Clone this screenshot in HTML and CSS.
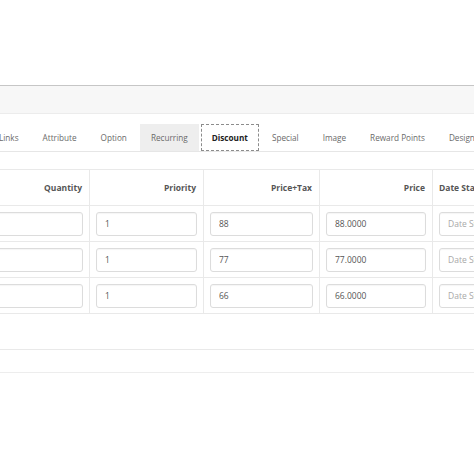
FILE: index.html
```html
<!DOCTYPE html>
<html>
<head>
<meta charset="utf-8">
<link rel="stylesheet" href="styles.css">
</head>
<body>
<div class="page">
  <div class="panel-heading"></div>
  <ul class="tabs">
    <li class="tab">Links</li>
    <li class="tab">Attribute</li>
    <li class="tab">Option</li>
    <li class="tab hover">Recurring</li>
    <li class="tab active">Discount</li>
    <li class="tab">Special</li>
    <li class="tab">Image</li>
    <li class="tab">Reward Points</li>
    <li class="tab">Design</li>
  </ul>
  <table class="grid">
    <colgroup>
      <col class="c-qty">
      <col class="c-pri">
      <col class="c-tax">
      <col class="c-price">
      <col class="c-date">
    </colgroup>
    <thead>
      <tr>
        <th class="r">Quantity</th>
        <th class="r">Priority</th>
        <th class="r">Price+Tax</th>
        <th class="r">Price</th>
        <th class="l">Date Start</th>
      </tr>
    </thead>
    <tbody>
      <tr>
        <td><input class="field" type="text" value=""></td>
        <td><input class="field" type="text" value="1"></td>
        <td><input class="field" type="text" value="88"></td>
        <td><input class="field" type="text" value="88.0000"></td>
        <td><input class="field" type="text" placeholder="Date Start"></td>
      </tr>
      <tr>
        <td><input class="field" type="text" value=""></td>
        <td><input class="field" type="text" value="1"></td>
        <td><input class="field" type="text" value="77"></td>
        <td><input class="field" type="text" value="77.0000"></td>
        <td><input class="field" type="text" placeholder="Date Start"></td>
      </tr>
      <tr>
        <td><input class="field" type="text" value=""></td>
        <td><input class="field" type="text" value="1"></td>
        <td><input class="field" type="text" value="66"></td>
        <td><input class="field" type="text" value="66.0000"></td>
        <td><input class="field" type="text" placeholder="Date Start"></td>
      </tr>
    </tbody>
    <tfoot>
      <tr>
        <td class="foot" colspan="5"></td>
      </tr>
    </tfoot>
  </table>
  <div class="panel-foot"></div>
</div>
</body>
</html>
```

FILE: styles.css
```css
html, body {
  margin: 0;
  padding: 0;
  background: #ffffff;
  overflow: hidden;
}

body {
  font-family: "Open Sans", "DejaVu Sans", sans-serif;
  font-size: 8.5px;
  color: #666666;
}

.page {
  padding-top: 85px;
  width: 474px;
  overflow: hidden;
}

.panel-heading {
  height: 27px;
  border-top: 1px solid #c6c6c6;
  border-bottom: 1px solid #ececec;
  background: #f7f7f7;
}

.tabs {
  list-style: none;
  margin: 10px 0 0 -12px;
  padding: 0;
  display: flex;
  gap: 2px;
  border-bottom: 1px solid #e6e6e6;
  width: 600px;
  font-size: 8.2px;
}

.tab {
  flex: none;
  height: 27px;
  line-height: 27px;
  padding: 0 11px;
  color: #6a6a6a;
  white-space: nowrap;
  box-sizing: border-box;
}

.tab.hover {
  background: #eeeeee;
}

.tab.active {
  border: 1px dashed #8c8c8c;
  line-height: 25px;
  padding: 0 10px;
  color: #222222;
  font-weight: 700;
}

.grid {
  margin: 17px 0 0 -31px;
  border-collapse: collapse;
  table-layout: fixed;
  width: 592px;
}

.c-qty { width: 120px; }
.c-pri { width: 114px; }
.c-tax { width: 116px; }
.c-price { width: 113px; }
.c-date { width: 129px; }

.grid th,
.grid td {
  border: 1px solid #e9e9e9;
  padding: 0 6px;
  box-sizing: border-box;
}

.grid thead tr {
  height: 36px;
}

.grid tbody tr {
  height: 36px;
}

.grid th {
  font-weight: 700;
  color: #555555;
  white-space: nowrap;
  overflow: hidden;
}

.grid th.r { text-align: right; padding-right: 7px; }
.grid th.l { text-align: left; }

.field {
  display: block;
  width: 100%;
  height: 24px;
  box-sizing: border-box;
  margin: 0;
  padding: 0 8px;
  border: 1px solid #dcdcdc;
  border-radius: 3px;
  font-family: "Open Sans", "DejaVu Sans", sans-serif;
  font-size: 8.5px;
  color: #555555;
  background: #ffffff;
  box-shadow: inset 0 1px 1px rgba(0, 0, 0, 0.04);
  outline: none;
}

.field::placeholder {
  color: #a8a8a8;
}

.grid tfoot tr {
  height: 36px;
}

.grid td.foot {
  border-left: none;
  border-right: none;
}

.panel-foot {
  height: 22px;
  border-bottom: 1px solid #ededed;
}
```
